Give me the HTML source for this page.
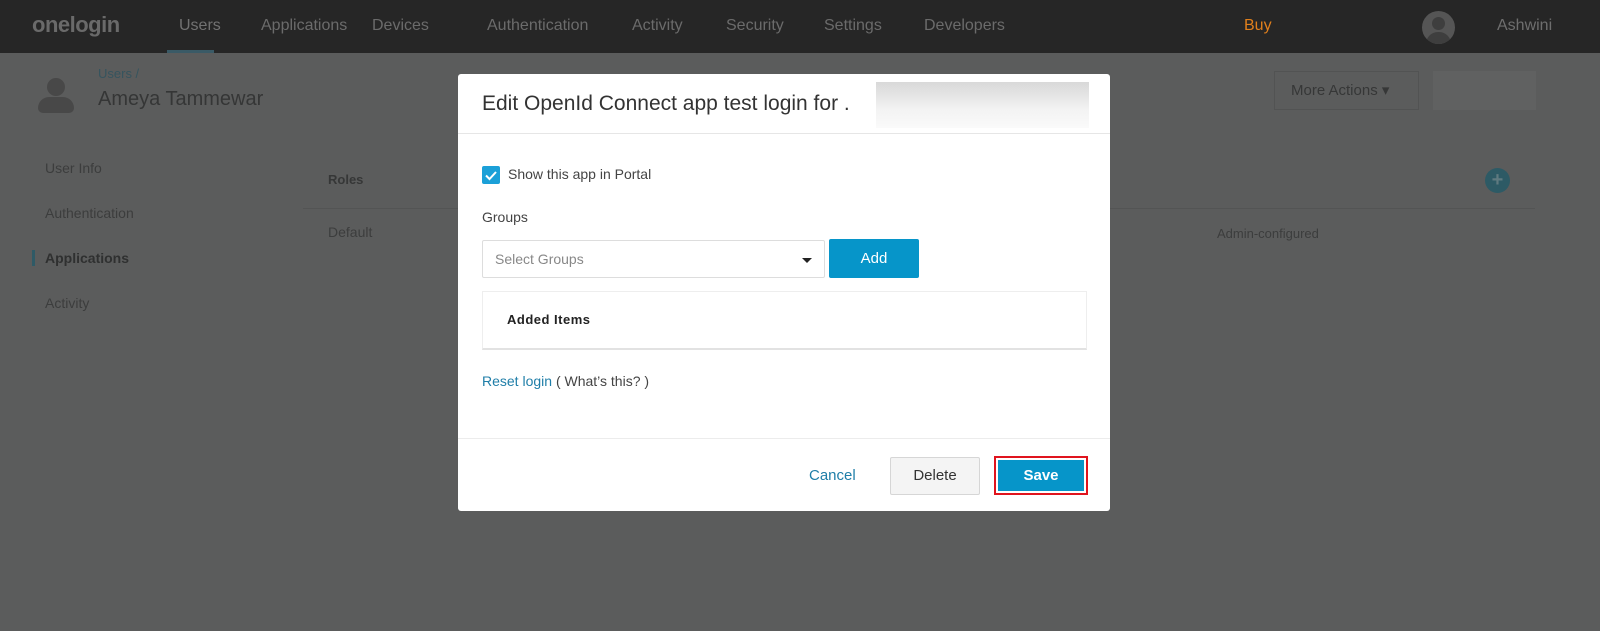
<!DOCTYPE html>
<html><head><meta charset="utf-8"><style>
*{box-sizing:border-box;margin:0;padding:0}
body{width:1600px;height:631px;overflow:hidden;background:#5b5c5c;font-family:"Liberation Sans",sans-serif;position:relative}
.nav{position:absolute;left:0;top:0;width:1600px;height:53px;background:#262626}
.nav span{position:absolute;top:17px;font-size:16px;color:#6b6b6b}
.logo{left:32px;top:12px!important;font-size:22px!important;color:#6a6a6a!important;letter-spacing:-0.5px;font-weight:bold}
.abs{position:absolute}
.side{font-size:14px;color:#3c3d3d}
.modal{position:absolute;left:458px;top:74px;width:652px;height:437px;background:#fff;border-radius:3px}
</style></head><body>
<div class="nav">
<span class="logo">onelogin</span>
<span style="left:179px;color:#727272">Users</span>
<div class="abs" style="left:167px;top:50px;width:47px;height:3px;background:#3a5a66"></div>
<span style="left:261px">Applications</span>
<span style="left:372px">Devices</span>
<span style="left:487px">Authentication</span>
<span style="left:632px">Activity</span>
<span style="left:726px">Security</span>
<span style="left:824px">Settings</span>
<span style="left:924px">Developers</span>
<span style="left:1244px;color:#e07f1c">Buy</span>
<div class="abs" style="left:1422px;top:11px;width:33px;height:33px;border-radius:50%;background:#555;overflow:hidden">
<div class="abs" style="left:10px;top:6px;width:13px;height:13px;border-radius:50%;background:#3e3e3e"></div>
<div class="abs" style="left:4px;top:21px;width:25px;height:16px;border-radius:12px 12px 0 0;background:#3e3e3e"></div></div>
<span style="left:1497px;color:#6e6e6e">Ashwini</span>
</div>
<div class="abs" style="left:38px;top:77px;width:36px;height:36px;">
<div class="abs" style="left:9px;top:1px;width:18px;height:18px;border-radius:50%;background:#484848"></div>
<div class="abs" style="left:0;top:20px;width:36px;height:16px;border-radius:18px 18px 8px 8px;background:#484848"></div></div>
<div class="abs" style="left:98px;top:66px;font-size:13px;color:#36545e">Users /</div>
<div class="abs" style="left:98px;top:88px;font-size:20px;color:#353636">Ameya Tammewar</div>
<div class="abs" style="left:1274px;top:71px;width:145px;height:39px;border:1px solid #525353"></div>
<div class="abs" style="left:1291px;top:81px;font-size:15px;color:#363737">More Actions ▾</div>
<div class="abs" style="left:1433px;top:71px;width:103px;height:39px;background:#606161"></div>
<div class="abs side" style="left:45px;top:160px">User Info</div>
<div class="abs side" style="left:45px;top:205px">Authentication</div>
<div class="abs" style="left:32px;top:250px;width:3px;height:16px;background:#2f5a66"></div>
<div class="abs side" style="left:45px;top:250px;font-weight:bold;color:#2f3030">Applications</div>
<div class="abs side" style="left:45px;top:295px">Activity</div>
<div class="abs" style="left:303px;top:208px;width:1232px;height:1px;background:#535454"></div>
<div class="abs" style="left:328px;top:172px;font-size:13px;font-weight:bold;color:#363737">Roles</div>
<div class="abs side" style="left:328px;top:224px">Default</div>
<div class="abs side" style="left:1217px;top:226px;font-size:13px">Admin-configured</div>
<div class="abs" style="left:1485px;top:168px;width:25px;height:25px;border-radius:50%;background:#2d5a65;color:#5f7a80;font-size:20px;line-height:24px;text-align:center;font-weight:bold">+</div>
<div class="modal">
<div class="abs" style="left:24px;top:18px;font-size:21px;color:#333">Edit OpenId Connect app test login for .</div>
<div class="abs" style="left:418px;top:8px;width:213px;height:46px;background:linear-gradient(180deg,#d8d8d8,#f3f3f3 60%,#fafafa)"></div>
<div class="abs" style="left:0;top:59px;width:652px;height:1px;background:#e6e6e6"></div>
<div class="abs" style="left:24px;top:92px;width:18px;height:18px;background:#1ba0d8;border-radius:2px"><svg width="18" height="18"><path d="M4 9.5l3.5 3.5 6.5-7" stroke="#fff" stroke-width="2" fill="none"/></svg></div>
<div class="abs" style="left:50px;top:92px;font-size:14px;color:#444">Show this app in Portal</div>
<div class="abs" style="left:24px;top:135px;font-size:14px;color:#444">Groups</div>
<div class="abs" style="left:24px;top:166px;width:343px;height:38px;border:1px solid #ddd;border-radius:2px"></div>
<div class="abs" style="left:37px;top:177px;font-size:14px;color:#888">Select Groups</div>
<div class="abs" style="left:344px;top:184px;width:0;height:0;border-left:5px solid transparent;border-right:5px solid transparent;border-top:5px solid #222"></div>
<div class="abs" style="left:371px;top:165px;width:90px;height:39px;background:#0695c9;border-radius:2px;color:#fff;font-size:15px;text-align:center;line-height:39px">Add</div>
<div class="abs" style="left:24px;top:217px;width:605px;height:59px;border:1px solid #eee;border-bottom:2px solid #e2e2e2"></div>
<div class="abs" style="left:49px;top:238px;font-size:13px;font-weight:bold;color:#222;letter-spacing:0.5px">Added Items</div>
<div class="abs" style="left:24px;top:299px;font-size:14px;color:#1f7ea8">Reset login <span style="color:#444">( What’s this? )</span></div>
<div class="abs" style="left:0;top:364px;width:652px;height:1px;background:#ececec"></div>
<div class="abs" style="left:351px;top:393px;font-size:15px;color:#1f7ea8">Cancel</div>
<div class="abs" style="left:432px;top:383px;width:90px;height:38px;background:#f4f4f4;border:1px solid #d6d6d6;border-radius:2px;font-size:15px;color:#333;text-align:center;line-height:36px">Delete</div>
<div class="abs" style="left:536px;top:382px;width:94px;height:39px;border:2px solid #e0141e;padding:2px"><div style="background:#0695c9;width:100%;height:100%;color:#fff;font-size:15px;font-weight:bold;text-align:center;line-height:31px">Save</div></div>
</div>
</body></html>
